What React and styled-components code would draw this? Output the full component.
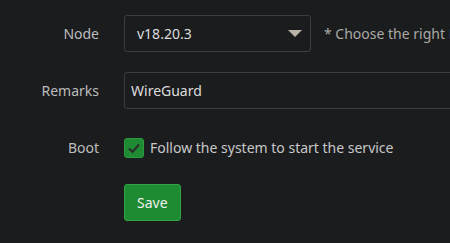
import React, { useState } from 'react';
import styled, { createGlobalStyle } from 'styled-components';

const Global = createGlobalStyle`
html, body {
  margin: 0;
  background: #1b1c1e;
  overflow: hidden;
}
body {
  font-family: 'Noto Sans', 'Open Sans', sans-serif;
  font-size: 14px;
}
`

const Form = styled.div`
display: flex;
flex-direction: column;
gap: 20px;
padding: 15px 0 0 0;
width: 600px;
`

const Row = styled.div`
display: flex;
align-items: center;
min-height: 37px;
margin-top: ${p => p.$pull ? '-2px' : '0'};
`

const Label = styled.div`
width: 99px;
padding-right: 25px;
text-align: right;
color: #bcbcbc;
`

const SelectBox = styled.div`
box-sizing: border-box;
width: 187px;
height: 37px;
border: 1px solid #3c3d40;
border-radius: 3px;
display: flex;
align-items: center;
justify-content: space-between;
padding: 0 8px 0 12px;
color: #dcdcdc;
`

const Arrow = styled.span`
width: 0;
height: 0;
border-left: 7px solid transparent;
border-right: 7px solid transparent;
border-top: 7px solid #bab4a8;
`

const Hint = styled.span`
margin-left: 13px;
color: #aaa9a4;
white-space: nowrap;
`

const Input = styled.input`
box-sizing: border-box;
width: 400px;
height: 37px;
background: transparent;
border: 1px solid #3c3d40;
border-radius: 3px;
padding: 0 6px;
color: #dcdcdc;
font: inherit;
outline: none;
`

const Check = styled.button`
box-sizing: border-box;
width: 20px;
height: 20px;
padding: 0;
border: 1px solid #2e9a40;
border-radius: 3px;
background: ${p => p.$on ? '#1e8a32' : 'transparent'};
display: flex;
align-items: center;
justify-content: center;
cursor: pointer;
`

const CheckText = styled.span`
margin-left: 6px;
color: #c8c8c8;
`

const SaveButton = styled.button`
box-sizing: border-box;
height: 37px;
padding: 0 12px;
background: #1e8a32;
border: 1px solid #30a545;
border-radius: 3px;
color: #f0f0f0;
font: inherit;
cursor: pointer;
`

const Spacer = styled.div`
width: 124px;
`

export default function App() {
  const [boot, setBoot] = useState(true);
  const [remarks, setRemarks] = useState('WireGuard');

  return (
    <>
      <Global />
      <Form>
        <Row>
          <Label>Node</Label>
          <SelectBox>
            <span>v18.20.3</span>
            <Arrow />
          </SelectBox>
          <Hint>* Choose the right Node version</Hint>
        </Row>
        <Row>
          <Label>Remarks</Label>
          <Input value={remarks} onChange={e => setRemarks(e.target.value)} />
        </Row>
        <Row>
          <Label>Boot</Label>
          <Check $on={boot} onClick={() => setBoot(b => !b)}>
            {boot && (
              <svg width="14" height="14" viewBox="0 0 14 14">
                <path d="M2 7.5 L5.5 11 L12 3.5" fill="none" stroke="#2b2b2b" strokeWidth="2" />
              </svg>
            )}
          </Check>
          <CheckText>Follow the system to start the service</CheckText>
        </Row>
        <Row $pull>
          <Spacer />
          <SaveButton>Save</SaveButton>
        </Row>
      </Form>
    </>
  );
}
